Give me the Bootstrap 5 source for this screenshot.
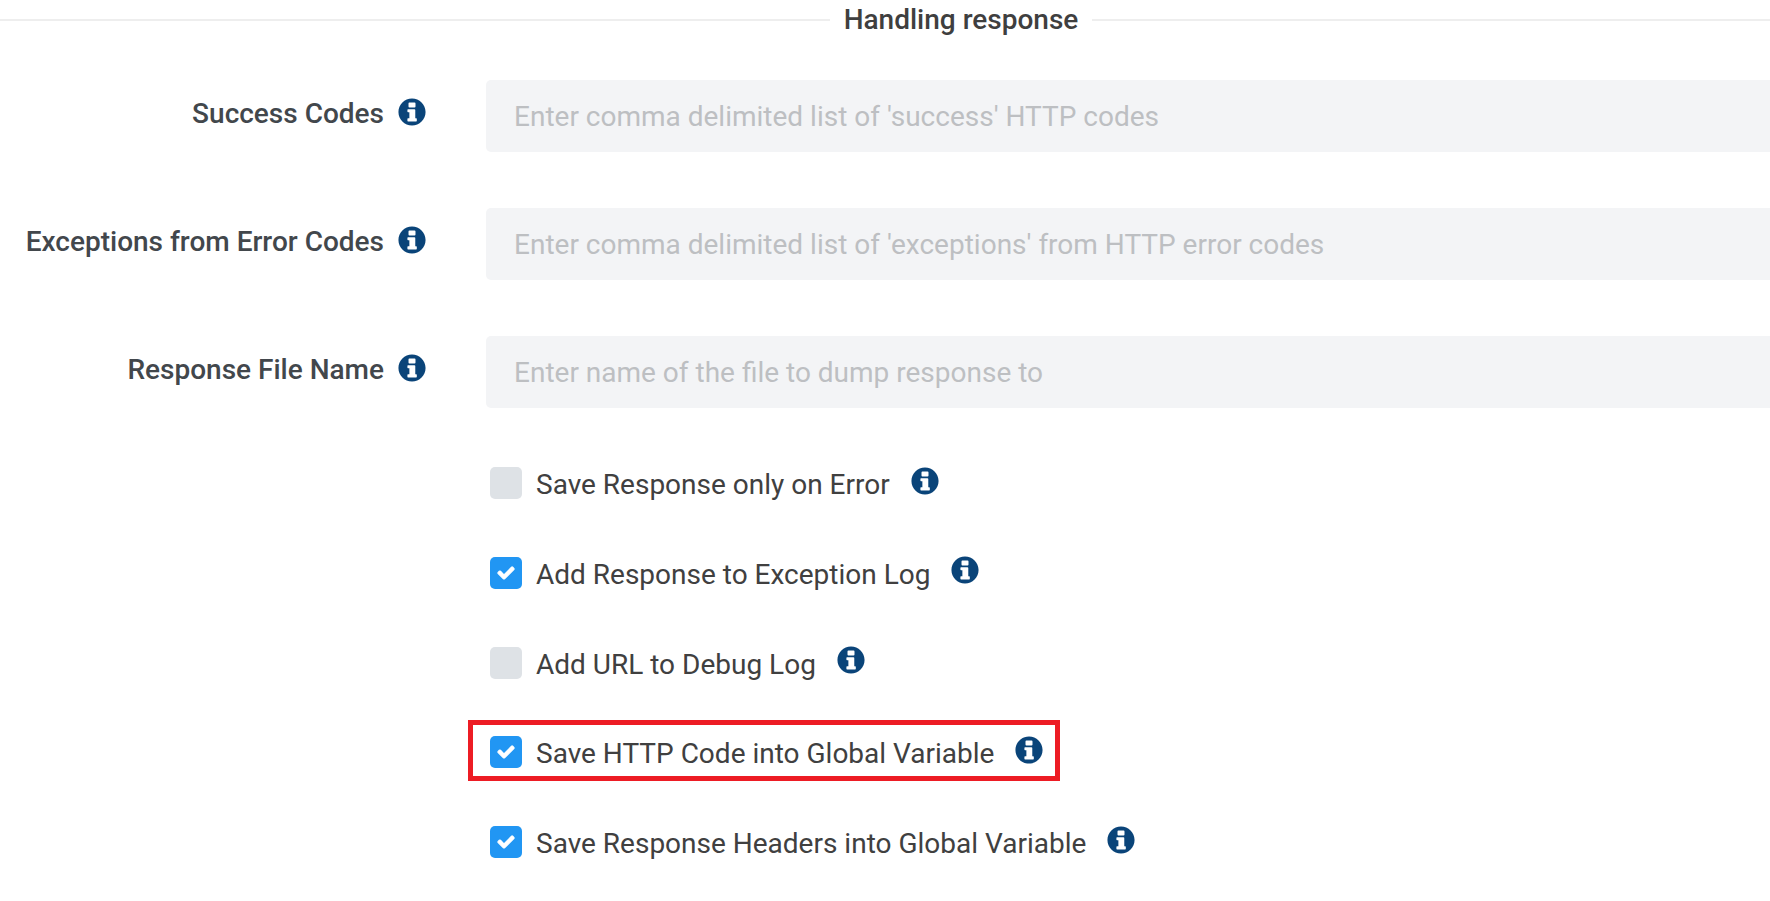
<!DOCTYPE html>
<html lang="en"><head><meta charset="utf-8"><title>Handling response</title>
<link href="https://cdn.jsdelivr.net/npm/bootstrap@5.3.0/dist/css/bootstrap.min.css" rel="stylesheet">
<style>
html,body{height:901px;overflow:hidden;background:#fff}
body{font-family:Roboto,"Liberation Sans",sans-serif;color:#343a40}
.pg{width:1922px}
.sect{height:40px;font-size:28px;font-weight:500;gap:14px;margin-bottom:40px;color:#3f3f3f}
.sect i{flex:1;height:2px;background:#eee}
.frow{height:72px;margin-bottom:56px}
.flab{width:384px;text-align:right;font-size:28px;font-weight:500;flex:none;line-height:72px;height:72px;margin-top:-4px;color:#42474c}
.ic{width:28px;height:28px;fill:#0a4479;flex:none}
.ibox{width:102px;flex:none;padding-left:14px;margin-top:-9px;display:flex}
.finp.form-control{height:72px;border:0;background:#f3f4f6;border-radius:5px;padding:0 28px;font-size:28px;color:#343a40;flex:1}
.finp::placeholder{color:#bdbfc2;opacity:1}
.cks{margin-left:490px;margin-top:59px}
.ckr{height:32px;margin-bottom:57.75px;font-size:28px;position:relative;color:#404040}
.ckr .form-check-input{width:32px;height:32px;margin:0 14px 0 0;border:0;border-radius:5px;background-color:#dee2e6;flex:none}
.ckr .form-check-input:checked{background-color:#2196f3;background-size:18px;background-image:url("data:image/svg+xml,%3Csvg xmlns='http://www.w3.org/2000/svg' viewBox='-30 -30 572 572'%3E%3Cpath fill='%23fff' stroke='%23fff' stroke-width='36' d='M173.898 439.404l-166.4-166.4c-9.997-9.997-9.997-26.206 0-36.204l36.203-36.204c9.997-9.998 26.207-9.998 36.204 0L192 312.69 432.095 72.596c9.997-9.997 26.207-9.997 36.204 0l36.203 36.204c9.997 9.997 9.997 26.206 0 36.204l-294.4 294.401c-9.998 9.997-26.207 9.997-36.204-.001z'/%3E%3C/svg%3E")}
.ckr label{white-space:nowrap;line-height:32px;padding-top:4px}
.ckr .ic{margin-left:21px;margin-top:-5px}
.hilite{position:absolute;left:-22px;top:-16px;width:592px;height:61px;border:5px solid #ed1c24;pointer-events:none}
</style></head><body>
<svg width="0" height="0" class="position-absolute"><symbol id="inf" viewBox="0 0 512 512"><path fill-rule="evenodd" d="M256 8C119 8 8 119 8 256s111 248 248 248 248-111 248-248S393 8 256 8z M208 84h96a16 16 0 0 1 16 16v56a16 16 0 0 1-16 16h-96a16 16 0 0 1-16-16v-56a16 16 0 0 1 16-16z M184 204h116a16 16 0 0 1 16 16v148h16a12 12 0 0 1 12 12v36a12 12 0 0 1-12 12H184a12 12 0 0 1-12-12v-36a12 12 0 0 1 12-12h24v-108h-24a12 12 0 0 1-12-12v-32a12 12 0 0 1 12-12z"/></symbol></svg>
<div class="pg">
<div class="sect d-flex align-items-center"><i></i><span>Handling response</span><i></i></div>
<div class="frow d-flex align-items-center"><label class="flab">Success Codes</label><div class="ibox"><svg class="ic"><use href="#inf"/></svg></div><input class="form-control finp" placeholder="Enter comma delimited list of 'success' HTTP codes"></div>
<div class="frow d-flex align-items-center"><label class="flab">Exceptions from Error Codes</label><div class="ibox"><svg class="ic"><use href="#inf"/></svg></div><input class="form-control finp" placeholder="Enter comma delimited list of 'exceptions' from HTTP error codes"></div>
<div class="frow d-flex align-items-center"><label class="flab">Response File Name</label><div class="ibox"><svg class="ic"><use href="#inf"/></svg></div><input class="form-control finp" placeholder="Enter name of the file to dump response to"></div>
<div class="cks">
<div class="ckr d-flex align-items-center"><input type="checkbox" class="form-check-input"><label>Save Response only on Error</label><svg class="ic"><use href="#inf"/></svg></div>
<div class="ckr d-flex align-items-center"><input type="checkbox" class="form-check-input" checked><label>Add Response to Exception Log</label><svg class="ic"><use href="#inf"/></svg></div>
<div class="ckr d-flex align-items-center"><input type="checkbox" class="form-check-input"><label>Add URL to Debug Log</label><svg class="ic"><use href="#inf"/></svg></div>
<div class="ckr d-flex align-items-center"><input type="checkbox" class="form-check-input" checked><label>Save HTTP Code into Global Variable</label><svg class="ic"><use href="#inf"/></svg><div class="hilite"></div></div>
<div class="ckr d-flex align-items-center"><input type="checkbox" class="form-check-input" checked><label>Save Response Headers into Global Variable</label><svg class="ic"><use href="#inf"/></svg></div>
</div>
</div>
<script src="https://cdn.jsdelivr.net/npm/bootstrap@5.3.0/dist/js/bootstrap.bundle.min.js"></script>
</body></html>
